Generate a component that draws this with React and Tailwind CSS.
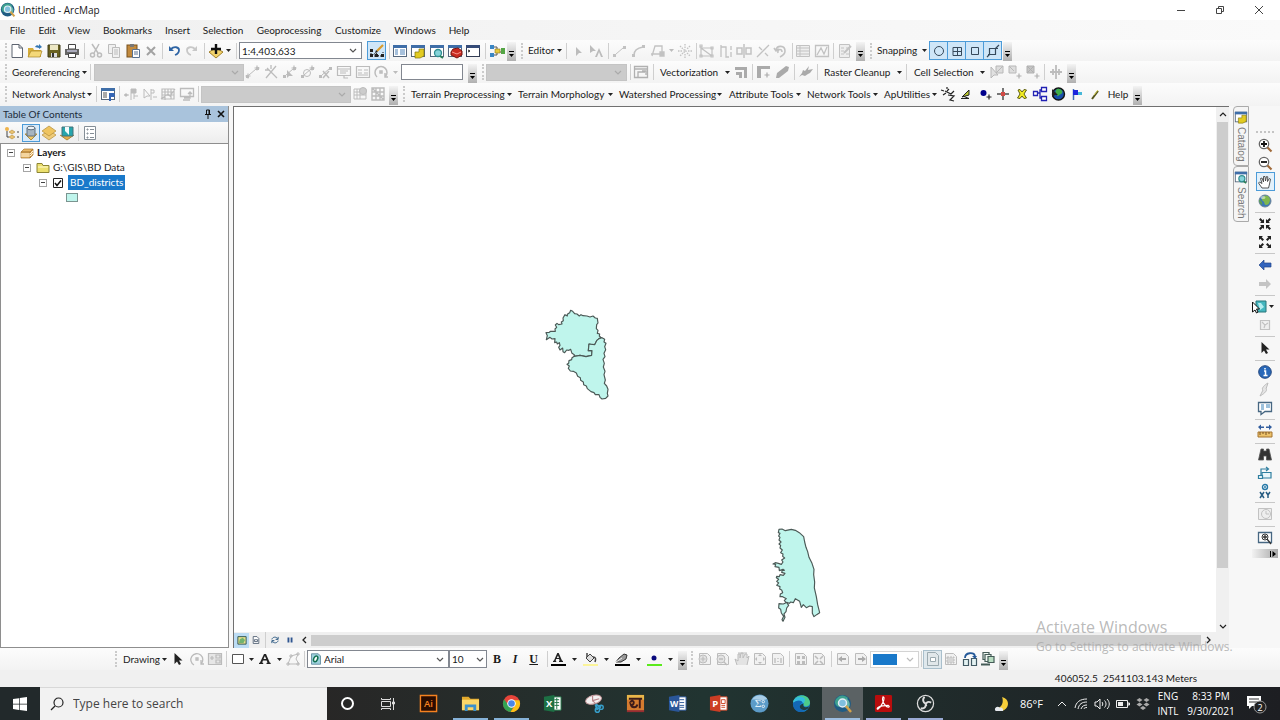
import React from "react";

const GREY = "#bcbcbc";
const caretPath = "M0 0h5L2.5 3z";

const nodes = (color) => (
  <g fill={color}>
    <path d="M1 11h3v3H1zM11 3h3v3h-3z" />
    <path d="M4 11 11 5" stroke={color} fill="none" />
  </g>
);
const plus = (x, y, color = GREY) => <path d={`M${x - 2.5} ${y}h5M${x} ${y - 2.5}v5`} stroke={color} strokeWidth="1.2" fill="none" />;
const win = (
  <g>
    <rect x="1.5" y="2.5" width="13" height="11" fill="#fff" stroke="#56677c" />
    <path d="M1 2h14v3H1z" fill="#3f6ea8" />
  </g>
);
const page = (
  <path d="M2.500 2.500h8l3 3v8h-11z" fill="#f1f1f1" stroke={GREY} />
);
const globe = (
  <g>
    <circle cx="8" cy="8" r="6" fill="#3b78b8" stroke="#6d8598" />
    <path d="M7 3c4-1 6 1 6 4s-2 5-4 5-1-3-3-4-1-4 1-5z" fill="#7fb74e" />
    <path d="M2 7c2 0 4 2 3 5-2-1-3-3-3-5z" fill="#5c9e53" />
    <ellipse cx="6" cy="4.500" rx="2.500" ry="1.500" fill="#fff" opacity=".5" />
  </g>
);
const bigPlus = (d) => (
  <g>
    <circle cx="7" cy="7" r="4.700" fill="#fff" stroke="#666" strokeWidth="1.300" />
    <path d="m10.500 10.500 4 4" stroke="#a06a3a" strokeWidth="2.200" />
    <path d={d} stroke="#111" strokeWidth="1.800" />
  </g>
);

const ICONS = {
  New: <path d="M3 1.500h7l3.500 3.500v9.500H3zM10 1.500V5h3.500" fill="#fff" stroke="#5d6470" />,
  Open: <g><path d="M1 5h5l1 2h7v7H1z" fill="#d6ad38" /><path d="m1 14 3-6h11l-2 6z" fill="#f4d878" stroke="#a88424" strokeWidth=".7" /><path d="M8 4c1-2 3-2 4-1V1l3 3-3 2V5" fill="#3577b5" /></g>,
  Save: <g><path d="M2 2h12v12H2z" fill="#6a6220" stroke="#403c18" /><path d="M4 2h8v5H4z" fill="#ece7c4" /><path d="M5 10h6v4H5z" fill="#ddd" /><path d="M6 10h2v4H6z" fill="#333" /></g>,
  Print: <g><path d="M4.500 1.500h7V6h-7z" fill="#fff" stroke="#444" /><path d="M1 6h14v6H1z" fill="#666" /><path d="M3 7h10v2H3z" fill="#aab" /><path d="M4.500 10.500h7v4h-7z" fill="#fff" stroke="#444" /></g>,
  Cut: <g fill="none" stroke="#bcbcbc" strokeWidth="1.500"><path d="m4 1 6 9M11 1 6 10" /><circle cx="4.500" cy="12" r="2" /><circle cx="11.500" cy="12" r="2" /></g>,
  Copy: <g fill="#f0f0f0" stroke="#bcbcbc"><path d="M2.500 1.500h7v9h-7z" /><path d="M6.500 4.500h7v10h-7zM8 7h4M8 9h4M8 11h4" /></g>,
  Paste: <g><rect x="2" y="2" width="10" height="12" fill="#c28a3e" stroke="#77501e" /><path d="M5 1h4v3H5z" fill="#777" /><path d="M7.500 6.500h7v8h-7zM9 9h4M9 11h4" fill="#fff" stroke="#587191" /></g>,
  Delete: <path d="m4 4 8 8M12 4l-8 8" stroke="#a2a2a2" strokeWidth="2" />,
  Undo: <g><path d="M5 6c3-3 8-2 8 1 0 2-1 4-4 5" fill="none" stroke="#2e64a4" strokeWidth="1.800" /><path d="M3 3v5h5z" fill="#2e64a4" /></g>,
  Redo: <g><path d="M11 6C8 3 3 4 3 7c0 2 1 4 4 5" fill="none" stroke="#c8c8c8" strokeWidth="1.800" /><path d="M13 3v5H8z" fill="#c8c8c8" /></g>,
  "Add Data": <g><path d="m1 9 7-4 7 4-7 6z" fill="#f3d36b" stroke="#a1802b" /><path d="M8 1v10M3 6h10" stroke="#111" strokeWidth="2.400" /></g>,
  "Editor Toolbar": <g><path d="M2 7v6h12V9M2 13l5-3 3 3" fill="none" stroke="#222" strokeDasharray="2 1" /><path d="M1 11h3v3H1zM6 11h3v3H6zM12 11h3v3h-3zM1 6h3v3H1z" fill="#222" /><path d="m8 8 6-6" stroke="#d99b2b" strokeWidth="2.200" /><path d="m6 10 1-3 2 2z" fill="#222" /></g>,
  "Table Of Contents": <g>{win}<path d="M3 7h3M3 9h3M3 11h3M8 7h5M8 9h5M8 11h5" stroke="#4f82b8" /></g>,
  "Catalog Window": <g>{win}<path d="M5 9h4V6h5v7l-4 2H5z" fill="#e2cb21" stroke="#807310" strokeWidth=".7" /></g>,
  "Search Window": <g>{win}<circle cx="9" cy="10" r="3.500" fill="#86d3da" stroke="#318e91" strokeWidth="1.300" /><path d="m11 13 3 2" stroke="#2a7d56" strokeWidth="2" /></g>,
  ArcToolbox: <g>{win}<path d="m4 9 2-3 5-1 4 3v4l-5 3-6-3z" fill="#c92a20" stroke="#721411" /><path d="m5 9 5 2 4-2" stroke="#fa988e" /></g>,
  Python: <g><rect x="1.500" y="2.500" width="13" height="11" fill="#fff" stroke="#333d54" /><path d="M1 2h14v3H1z" fill="#364c79" /><path d="m3 7 2 1-2 1" fill="none" stroke="#222" /></g>,
  ModelBuilder: <g><path d="M3 4h5v5h5M3 12h5V8" fill="none" stroke="#555" /><path d="M1 2h4v4H1z" fill="#3986c4" /><path d="M1 10h4v4H1z" fill="#3986c4" /><path d="M6 6h5v4H6z" fill="#e7c93a" stroke="#8d7819" strokeWidth=".6" /><path d="M12 5h4v6h-4z" fill="#54a545" /></g>,
  "Edit Tool": <path d="M6 4v9l3-3h3z" fill={GREY} />,
  "Edit Annotation": <g fill={GREY}><path d="M2 2v8l3-2h3z" /><path d="m7 14 4-9 4 9h-2l-2-5-2 5z" /></g>,
  Straight: nodes("#c2c2c2"),
  Arc: <g><path d="M3 12C3 8 6 5 12 4" fill="none" stroke="#c2c2c2" strokeWidth="1.400" /><path d="M1 11h3v3H1zM11 2h3v3h-3z" fill="#c2c2c2" /></g>,
  Trace: <g fill="none" stroke="#c2c2c2" strokeWidth="1.300"><path d="m3 13 3-10h7v8H2" /><path d="M11 9h4v4h-4z" fill="#c2c2c2" /></g>,
  Point: <g stroke="#c2c2c2" strokeWidth="1.300" strokeDasharray="1.500 1"><path d="M8 1v4M8 11v4M1 8h4M11 8h4M3 3l3 3M10 10l3 3M13 3l-3 3M6 10l-3 3" /><path d="M7 7h2v2H7z" /></g>,
  "Edit Vertices": <g fill="none" stroke="#c2c2c2" strokeWidth="1.200"><path d="M2 3v10h11V5H2l11 8" /><path d="M1 2h2v2H1zM12 12h2v2h-2zM1 12h2v2H1zM12 4h2v2h-2z" /></g>,
  Reshape: <g fill="none" stroke="#c2c2c2" strokeWidth="1.300"><path d="M3 2v12M3 4h5v10h3M13 3v4M13 9v5" /></g>,
  "Cut Polygons": <path d="M8 1v14M1 5h5v6H1zM10 5h5v6h-5z" fill="none" stroke="#c2c2c2" strokeWidth="1.500" />,
  Split: <path d="m2 14 12-12M4 4l3 3M10 10l3 3" fill="none" stroke="#c2c2c2" strokeWidth="1.300" />,
  Rotate: <path d="M3 7c1-5 9-5 9 1 0 3-3 5-5 6M5 10c-1-4 4-5 4-1M1 5l2 3 3-2" fill="none" stroke="#c2c2c2" strokeWidth="1.600" />,
  Attributes: <path d="M1.500 2.500h13v11h-13zM1 5h14M1 8h14M1 11h14M5 3v10" fill="#eee" stroke="#c2c2c2" />,
  Sketch: <path d="M1.500 2.500h13v11h-13zM3 12l4-7 3 6 3-7" fill="none" stroke="#c2c2c2" strokeWidth="1.300" />,
  "Create Features": <g><path d="M2.500 1.500h10v13h-10zM4 5h3M4 8h3M4 11h3M9 5h3M9 11h3" fill="#eee" stroke="#c2c2c2" /><path d="m7 10 7-7" stroke="#c2c2c2" strokeWidth="2" /></g>,
  "Point Snapping": <circle cx="8" cy="8" r="4.500" fill="none" stroke="#36495b" />,
  "End Snapping": <path d="M4 4.500h8.500v8H4zM8.500 4v9M4 8.500h9" fill="none" stroke="#36495b" />,
  "Vertex Snapping": <path d="M4.500 4.500h7v7h-7z" fill="none" stroke="#36495b" />,
  "Edge Snapping": <path d="M4.500 5.500h6v6h-6zM2 14l3-3M10 6l4-4M3 11.500h2M10 5.500h3" fill="none" stroke="#36495b" strokeWidth="1.200" />,
  "Add Control Points": <g>{nodes(GREY)}{plus(12, 4)}{plus(3, 12)}</g>,
  "Auto Registration": <g stroke={GREY} strokeWidth="1.300"><path d="m4 4 10 10M13 2 3 14M2 6h4M8 1v4" fill="none" /></g>,
  "Select Link": <g>{nodes(GREY)}<path d="M5 6v8l2-2h4z" fill={GREY} />{plus(12, 4)}</g>,
  "Zoom To Link": <g>{nodes(GREY)}<circle cx="7" cy="9" r="3.500" fill="none" stroke={GREY} />{plus(12, 4)}</g>,
  "Delete Link": <g>{nodes(GREY)}<path d="m5 7 6 7M11 7l-6 7" stroke={GREY} strokeWidth="1.500" /></g>,
  Viewer: <path d="M1.500 2.500h13v9h-13zM1 5h14M4 7h8M4 9h6M8 11v3h4" fill="none" stroke={GREY} strokeWidth="1.200" />,
  "Link Table": <path d="M1.500 2.500h13v11h-13zM3 6h4M9 6h4M3 9h4M9 9h4M3 11h10" fill="none" stroke={GREY} strokeWidth="1.200" />,
  "Rotate Raster": <g fill="none" stroke={GREY} strokeWidth="1.500"><path d="M4 13a6 6 0 1 1 8 0M12 9v4h3" /><path d="M7 7h2v2H7z" /></g>,
  "Raster Options": <path d="M1.500 2.500h13v11h-13zM1 5h14M5 13V8h7M9 7h4v4" fill="none" stroke="#b0b0b0" strokeWidth="1.300" />,
  "Generate Features": <path d="M2 3h12v11h-3V6H2zM3 8h6v6H6v-3H3z" fill="#aaa" />,
  Tracing: <g><path d="M1 2h13v3H5v9H1z" fill="#aaa" />{plus(11, 11, "#aaa")}</g>,
  "Tracing Between": <path d="m2 14 1-5 9-7 3 1-1 4-9 7z" fill="#aaa" />,
  "Vectorization Settings": <path d="m1 13 3-4 1-3 2 1 4-5-1 4 5-1-3 4-2 1-3 2-3-1z" fill="#aaa" />,
  "Select Cells": <g><path d="M7 2h7v7H7zM7 9l7-7" fill="#ddd" stroke="#b8b8b8" /><path d="M2 3v11l3-3h4z" fill="#e0e0e0" stroke="#b8b8b8" /></g>,
  "Select Connected": <g><path d="M2 2h7v7H2zM2 2l5 5" fill="#ddd" stroke="#b8b8b8" />{plus(12, 12, "#b0b0b0")}</g>,
  "Find Connected": <g><path d="M2 2h7v7H2zM2 9l7-7M2 2l7 7" fill="#c5c5c5" stroke="#b0b0b0" />{plus(12, 12, "#b0b0b0")}</g>,
  "Split Cells": <path d="M8 1v14M2 8h12M5 5v6M11 5v6" stroke={GREY} strokeWidth="1.800" />,
  "Network Analyst Window": <g>{win}<path d="M3 7h4M3 9h4M3 11h4" stroke="#555" /><path d="M9 7h5l1 2-1 2h-3v4H9z" fill="#3566b6" /></g>,
  "Create Location": <g stroke={GREY} fill={GREY}><path d="M1 9h5" /><path d="M2 8h2v2H2zM8 3v11M8 3h5v4H8M11 10h4M11 7v6" /></g>,
  "Move Location": <g stroke={GREY} fill="none"><path d="M2 3v9l3-2h3zM9 3v11M9 4h3v3H9M11 11h4" /></g>,
  Solve: <path d="M2 3h12v10H2zM2 6h12M2 9h12M5 3v11M8 3v7M11 3v10M1 13l7-5 2 2 5-7" fill="none" stroke={GREY} strokeWidth="1.200" />,
  Directions: <path d="M1.500 2.500h13v8h-13zM4 14h7M5 12h6V6M9 8l2-2 2 2" fill="none" stroke={GREY} strokeWidth="1.300" />,
  "Network Identify": <g fill="none" stroke={GREY}><path d="M2 3h12v10H2zM2 6h12M2 9h12M5 3v10M8 3v10" /><circle cx="11" cy="5" r="3.500" fill="#ccc" /></g>,
  "Build Network": <path d="M2 2h12v12H2zM2 6h12M2 10h12M6 2v12M10 2v12M2 2l12 12" fill="none" stroke={GREY} strokeWidth="1.400" />,
  "Flow Path": <path d="m1 4 3 1M7 1v2M3 9l3-2M5 5l2 1 4 2 3-3M8 9l6 1-4 4 4 1M9 3 7 5" fill="none" stroke="#222" strokeWidth="1.200" />,
  "Interactive Slope": <g><path d="m4 11 7-7v5z" fill="#b9c62e" stroke="#222" /><path d="M3 12.500h8l-5-2" stroke="#222" /></g>,
  "Point Delineation": <g><circle cx="6.500" cy="7" r="3" fill="#00008c" />{plus(12, 11, "#222")}</g>,
  "Batch Point": <g><path d="M8 2v12M2 8h12" stroke="#777" strokeWidth="2" /><path d="M6 6h4v4H6z" fill="#d24b46" /></g>,
  "Assign Related": <path d="m4 4 2-.5L8 6l2-2.500 2.500.5L10 8l2.500 4-2.500.5L8 10l-2 2.500L3.500 12 6 8z" fill="#f0ea22" stroke="#606014" />,
  Network: <path d="M1.500 5.500h4v4h-4zM9.500 1.500h5v4h-5zM9.500 10.500h5v4h-5zM6 7h2v5h1M8 7V4h1" fill="#fff" stroke="#2222b4" strokeWidth="1.300" />,
  "Google Export": <g><circle cx="8.500" cy="8" r="6" fill="#174eaa" stroke="#111" strokeWidth="1.400" /><path d="M7 3c5-1 7 4 4 5S8 12 7 9 4 6 7 3z" fill="#3fae48" /><path d="M2 3v8l3-2h3z" fill="#222" /></g>,
  Flag: <g><path d="M4.500 3v11" stroke="#3f6fb5" strokeWidth="1.500" /><path d="M4 4h5v5H4z" fill="#1b25dd" /><path d="M9 6h4v3H9z" fill="#46b7d8" /></g>,
  Pencil: <g><path d="m5 13 6-8" stroke="#56561c" strokeWidth="2" /><path d="m7 9 4-5" stroke="#d8d058" /></g>,
  Pan: <path d="m5 14-3.500-5 1-1L5 9.500l-1.500-5L5 4l1.500 4L6.500 2.500H8L8.500 7l1-4.500 1.300.3L10.500 7.500l1.800-3 1.200.6L12.500 10l-1 4z" fill="#fff" stroke="#444" strokeWidth=".9" />,
  "Zoom In": bigPlus("M4 7h6M7 4v6"),
  "Zoom Out": bigPlus("M4 7h6"),
  "Full Extent": globe,
  "Fixed Zoom In": <path d="M7 3v4H3l1.300-1.300L2 3.500 3.500 2l2.200 2.300zM9 3v4h4l-1.300-1.300L14 3.500 12.500 2l-2.200 2.300zM7 13V9H3l1.300 1.300L2 12.500 3.500 14l2.200-2.300zM9 13V9h4l-1.300 1.300L14 12.500 12.500 14l-2.200-2.300z" fill="#222" />,
  "Fixed Zoom Out": <path d="M2 6V2h4L4.700 3.300 7 5.500 5.500 7 3.300 4.700zM14 6V2h-4l1.300 1.300L9 5.500 10.500 7l2.200-2.300zM2 10v4h4l-1.300-1.300L7 10.500 5.500 9l-2.200 2.300zM14 10v4h-4l1.300-1.300L9 10.500 10.500 9l2.200 2.300z" fill="#222" />,
  Back: <path d="m2 8 5-5v3h7v4H7v3z" fill="#3264bd" stroke="#24468a" strokeWidth=".7" />,
  Forward: <path d="m14 8-5-5v3H2v4h7v3z" fill="#c4c4c4" />,
  "Select Features": <g><path d="M5 2h10v11H5z" fill="#44b6bf" stroke="#29777b" /><path d="M7 4h3l3 4-4 3z" fill="#b4edf0" /><path d="M1.500 3v10l2.500-2 1.500 3 1.500-1-1.500-3h3z" fill="#fff" stroke="#111" /></g>,
  "Clear Selection": <path d="M3.500 3.500h9v9h-9zM5 5l3 3 3-2M8 8l-1 3" fill="#eee" stroke="#c2c2c2" strokeWidth="1.200" />,
  "Select Elements": <path d="M4.500 2v11l2.500-2.500L9 14l2-1-2-3.500h3.500z" fill="#222" />,
  Identify: <g><circle cx="8" cy="8" r="6.300" fill="#2868b9" stroke="#24477e" /><path d="M7 7h1.500v4.500M6.500 11.500h4M8 4v1.500" stroke="#fff" strokeWidth="1.500" fill="none" /></g>,
  Hyperlink: <path d="M11 1C7 3 4 7 6 8l-3 6c4-2 8-6 6-7z" fill="#e4e4e4" stroke="#bbb" />,
  "HTML Popup": <g><path d="M1.500 2.500h13v9H8l-4 3v-3H1.500z" fill="#fff" stroke="#476782" strokeWidth="1.300" /><path d="M4 5h3M4 7h3M4 9h3M9 5h4M9 7h4" stroke="#3d83b9" /></g>,
  Measure: <g><path d="M1 9h14v5H1z" fill="#ecc16a" stroke="#a57531" /><path d="M3 9v3M6 9v2M9 9v3M12 9v2" stroke="#7b5424" /><path d="m1 4 3-2.500v2h3v1.500H4v2zM15 4l-3-2.500v2H9v1.500h3v2z" fill="#315d9e" /></g>,
  Find: <path d="M4 2h2.500v2h3V2H12l2.500 11h-5V9h-3v4h-5z" fill="#333" stroke="#555" strokeWidth=".8" />,
  "Find Route": <g fill="#e9f6fa" stroke="#307fa0" strokeWidth="1.200"><path d="M5 7.500h9v5.500H5z" /><path d="M4 10V4h7M9 2l2.500 2L9 6" fill="none" /><path d="M1.500 10.500h4v3h-4z" /></g>,
  "Go To XY": <g><circle cx="8" cy="4" r="2.500" fill="#fff" stroke="#2778a7" strokeWidth="1.400" /><circle cx="8" cy="4" r="1" fill="#2778a7" /><path d="m3 9 4 6M7 9l-4 6M9 9l2 3 2-3M11 12v3" fill="none" stroke="#285d83" strokeWidth="1.500" /></g>,
  "Time Slider": <g fill="#eee" stroke="#c2c2c2"><path d="M1.500 2.500h13v11h-13z" /><circle cx="9" cy="8" r="4.500" /><path d="M9 5v3h3" /></g>,
  "Viewer Window": <g><path d="M1.500 2.500h13v10h-13z" fill="#fff" stroke="#476782" strokeWidth="1.300" /><circle cx="8" cy="7" r="3" fill="#fff" stroke="#333" /><path d="M6 7h4M8 5v4M10 9l4 5" stroke="#333" strokeWidth="1.300" /></g>,
  "List By Drawing Order": <g><circle cx="3" cy="4" r="2" fill="#eeb34b" /><path d="m5 7 3-2 3 2-3 2zM5 12l3-2 3 2-3 2z" fill="#e9c26f" stroke="#b48a3d" strokeWidth=".6" /><path d="M3 6v6h2M13 7h2M13 12h2" fill="none" stroke="#444" /></g>,
  "List By Source": <g><path d="M2 9h12l-6 6z" fill="#f0c768" stroke="#b28e3d" /><path d="M4 3h8v8H4z" fill="#a7b4c0" stroke="#5f7180" /><ellipse cx="8" cy="3" rx="4" ry="1.800" fill="#eef2f7" stroke="#5f7180" /></g>,
  "List By Visibility": <g stroke="#b28c3a" strokeWidth=".7"><path d="m1 10 7-5 7 5-7 5z" fill="#efcc7a" /><path d="m1 6 7-5 7 5-7 5z" fill="#efc45f" /></g>,
  "List By Selection": <g><path d="m1 10 7 5 7-5" fill="#e4ad4c" stroke="#b28c3a" /><path d="M3 2h11v9H3z" fill="#26a6ad" stroke="#457078" /><path d="M6 2v4l4 4V2" fill="#f3fafb" /></g>,
  Options: <path d="M2.500 1.500h11v13h-11zM5 4h1v1H5zM5 8h1v1H5zM5 12h1v1H5zM8 4.500h4M8 8.500h4M8 12.500h4" fill="#fff" stroke="#858e96" />,
  "Rotate Element": <g fill="none" stroke="#bbb" strokeWidth="1.300"><path d="M5 14a6 6 0 1 1 7-1M12 9v4h3" /><path d="M7 7h2v2H7z" /></g>,
  "Zoom Selected": <path d="M1.500 2.500h13v11h-13zM3 7h4M5 5v4M9 4h4v3H9zM9 9h4v3H9z" fill="#e6e6e6" stroke="#bbb" strokeWidth="1.200" />,
  Rectangle: <path d="M2.500 3.500h11v9h-11z" fill="#fff" stroke="#555" />,
  "Text Tool": <path d="M4.500 13H2v-1l1-.5L7 3h2l3.700 8.500 1 .5v1H9.500v-1l1-.5-.8-2H6l-.8 2 1 .5v1zM6.500 8h2.700L7.900 5z" fill="#222" />,
  "Edit Shape": <path d="M3 13 6 5l7-2-2 5 3 5H3M2 12h2v2H2zM12 2h2v2h-2zM5 4h2v2H5zM12 12h2v2h-2z" fill="none" stroke="#bbb" />,
  "Layout Zoom In": <g>{page}<circle cx="6" cy="8" r="4" fill="#e3e3e3" stroke={GREY} />{plus(6, 8)}</g>,
  "Layout Zoom Out": <g>{page}<circle cx="6" cy="8" r="4" fill="#e3e3e3" stroke={GREY} /><path d="M4 8h4M9 11l3 3" stroke={GREY} strokeWidth="1.300" /></g>,
  "Layout Pan": <path d="m3 14-2-6 3 2V3h2v4l1-5h2v5l2-4h2v4l2-2-2 9M4 2h9" fill="#e3e3e3" stroke={GREY} />,
  "Zoom Whole Page": <g>{page}<path d="m8 3 2 2H6zM8 13l2-2H6zM3 8l2-2v4zM13 8l-2-2v4z" fill={GREY} /></g>,
  "Zoom 100": <g>{page}<path d="M5 7v5M11 7v5M8 7v1M8 10v1" stroke={GREY} strokeWidth="1.300" /></g>,
  "Layout Fixed In": <g>{page}<path d="M4 5h3v3H4zM9 5h3v3H9zM4 10h3v3H4zM9 10h3v3H9z" fill={GREY} /></g>,
  "Layout Fixed Out": <g>{page}<path d="m4 5 3 3M12 5 9 8M4 13l3-3M12 13l-3-3" stroke={GREY} strokeWidth="1.600" /></g>,
  "Layout Back": <g>{page}<path d="m3 8 4-3v2h4v2H7v2z" fill="#aaa" /></g>,
  "Layout Forward": <g>{page}<path d="M13 8 9 5v2H5v2h4v2z" fill="#aaa" /></g>,
  "Draft Mode": <g><path d="M2.500 1.500h8l3 3v10h-11z" fill="#e1e7ea" stroke="#9caab0" /><path d="M5.500 6.500h5v4h-5z" fill="#fff" stroke="#9caab0" /></g>,
  "Focus Frame": <g>{page}<path d="M4 6h7v6H4z" fill="#d5d5d5" stroke={GREY} strokeDasharray="2 1" /></g>,
  "Change Layout": <g><path d="M1.500 8.500h5v6h-5zM9.500 7.500h5v7h-5z" fill="#e5f3f3" stroke="#435b65" strokeWidth="1.200" /><path d="M3 7c0-6 9-6 10-2" fill="none" stroke="#245999" strokeWidth="1.800" /><path d="M10 5h5l-2 3z" fill="#245999" /></g>,
  "Data Driven Pages": <g fill="#eff8f2" stroke="#455c58" strokeWidth="1.200"><path d="M3 1.500h6v7H3z" /><path d="M5 3.500h6v7H5z" /><path d="M8 5.500h6v6H8z" fill="#b9ddc2" /><path d="M1 13.500h9" strokeWidth="2" /></g>,
  "Data View": <g><path d="M2.500 3.500h11v10h-11z" fill="#e7df8a" stroke="#315a58" strokeWidth="1.300" /><path d="m4 12 1-5 4-2 3 3-2 4z" fill="#6fb36f" /></g>,
  "Layout View": <path d="M3.500 2.500h6l3 3v8h-9zM5.500 7.500h5v3h-5z" fill="#fff" stroke="#425368" strokeWidth="1.300" />,
  Refresh: <g fill="none" stroke="#315d85" strokeWidth="1.600"><path d="M3 7c1-4 7-5 9-1M13 9c-1 4-7 5-9 1" /><path d="M13 3v4H9M3 13V9h4" /></g>,
  Pause: <path d="M4 4h3v8H4zM9 4h3v8H9z" fill="#2e5590" />,
  Style: <g><path d="M2 1h9l3 3v11H2z" fill="#9ed1dd" stroke="#527e91" /><ellipse cx="7.500" cy="8" rx="2.500" ry="4" fill="#fff" stroke="#127050" strokeWidth="2" transform="rotate(25 8 8)" /></g>,
};

function Icon({ name, className = "size-4" }) {
  return <svg viewBox="0 0 16 16" className={"shrink-0 " + className} fill="none" aria-hidden="true">{ICONS[name]}</svg>;
}
function Tool({ name, className = "", icon }) {
  return <button type="button" aria-label={name} className={"flex shrink-0 items-center justify-center " + className}><Icon name={name} className={icon} /></button>;
}
function Group({ names, className }) {
  return <div className={"flex shrink-0 items-center justify-between " + className}>{names.map((n) => <Tool key={n} name={n} />)}</div>;
}
function Caret({ color = "#222" }) {
  return <svg viewBox="0 0 5 3" className="h-[3px] w-[5px] shrink-0" aria-hidden="true"><path d={caretPath} fill={color} /></svg>;
}
function Drop({ label = "More", color, className = "w-2" }) {
  return <button type="button" aria-label={label} className={"flex h-4 shrink-0 items-center justify-center " + className}><Caret color={color} /></button>;
}
const Sep = ({ className = "w-2" }) => <div className={"flex h-4 shrink-0 justify-center " + className}><div className="w-px bg-[#cfcfcf]" /></div>;
const Grip = ({ className = "" }) => <div className={"h-4 w-1.5 shrink-0 " + className}><div className="mx-auto h-full w-0 border-l-2 border-dotted border-[#cbcbcb]" /></div>;
function Overflow({ className = "" }) {
  return (
    <button type="button" aria-label="Toolbar options" className={"flex h-[19px] w-[9px] shrink-0 flex-col items-center justify-end gap-0.5 self-end bg-linear-to-b from-[#f4f4f4] to-[#b0b0b0] pb-1 " + className}>
      <span className="h-px w-[5px] bg-black" /><Caret color="#000" />
    </button>
  );
}
function Menu({ children, className }) {
  return <button type="button" className={"flex shrink-0 items-center justify-between whitespace-nowrap " + className}>{children}<Caret /></button>;
}
function Chevron({ d = "M1 1l3 3 3-3", className = "h-[5px] w-2", color = "#555" }) {
  return <svg viewBox="0 0 8 5" className={"shrink-0 " + className} fill="none" stroke={color} aria-hidden="true"><path d={d} strokeWidth="1.200" /></svg>;
}
function Combo({ label, value = "", className, disabled }) {
  return (
    <div className={"relative h-[17px] shrink-0 border " + (disabled ? "border-[#c4c4c4] bg-[#cbcbcb] " : "border-[#828790] bg-white ") + className}>
      <select aria-label={label} disabled={disabled} className="block size-full appearance-none bg-transparent pr-4 pl-0.5 leading-none outline-none"><option>{value}</option></select>
      <div className="pointer-events-none absolute inset-y-0 right-1 flex items-center"><Chevron color={disabled ? "#aaa" : "#555"} /></div>
    </div>
  );
}

const MENUS = [["File", "w-[29px]"], ["Edit", "w-[30px]"], ["View", "w-[34px]"], ["Bookmarks", "w-[63px]"], ["Insert", "w-[37px]"], ["Selection", "w-[54px]"], ["Geoprocessing", "w-[78px]"], ["Customize", "w-[60px]"], ["Windows", "w-[54px]"], ["Help", "w-[34px]"]];

function TopBars() {
  return (
    <header className="shrink-0">
      <div className="flex h-5 items-center bg-white pr-0.5">
        <AppLogo className="size-4" />
        <h1 className="ml-0.5 font-['Open_Sans']">Untitled - ArcMap</h1>
        <div className="ml-auto flex items-center">
          <button type="button" aria-label="Minimize" className="flex w-[39px] justify-center"><svg viewBox="0 0 10 10" className="size-2.5" stroke="#444"><path d="M1 5.500h8" /></svg></button>
          <button type="button" aria-label="Restore" className="flex w-[39px] justify-center"><svg viewBox="0 0 10 10" className="size-2.5" stroke="#444" fill="none"><path d="M1.500 3.500h5v5h-5zM3.500 3V1.500h5v5H7" /></svg></button>
          <button type="button" aria-label="Close" className="flex w-[39px] justify-center"><svg viewBox="0 0 10 10" className="size-2.5" stroke="#444"><path d="m1 1 8 8M9 1 1 9" /></svg></button>
        </div>
      </div>
      <nav className="flex h-5 items-center bg-linear-to-r from-[#f0f0f0] to-[#fafafa] pl-[3px]">
        {MENUS.map(([m, w]) => <button key={m} type="button" className={"shrink-0 text-center whitespace-nowrap " + w}>{m}</button>)}
      </nav>
      <div className="flex h-[21px] items-center bg-linear-to-b from-[#fcfcfc] to-[#f3f3f3] pl-[3px]">
        <Grip /><Group className="w-[71px]" names={["New", "Open", "Save", "Print"]} />
        <Sep /><Group className="w-[71px]" names={["Cut", "Copy", "Paste", "Delete"]} />
        <Sep className="w-[7px]" /><Group className="w-[34px]" names={["Undo", "Redo"]} />
        <Sep /><Tool name="Add Data" /><Drop label="Add data options" className="w-[9px]" />
        <Sep className="w-1.5" /><Combo label="Map scale" value="1:4,403,633" className="w-[123px]" />
        <Tool name="Editor Toolbar" className="ml-[5px] size-[19px] border border-[#4c9bd8] bg-[#cfe6f8]" />
        <Sep className="w-1.5" /><Group className="w-[89px]" names={["Table Of Contents", "Catalog Window", "Search Window", "ArcToolbox", "Python"]} />
        <Sep /><Tool name="ModelBuilder" /><Overflow className="ml-0.5" />
        <Grip className="ml-[3px]" /><Menu className="ml-[3px] w-[34px]">Editor</Menu>
        <Sep /><Group className="w-[34px]" names={["Edit Tool", "Edit Annotation"]} />
        <Sep /><Group className="w-[53px]" names={["Straight", "Arc", "Trace"]} /><Drop color={GREY} label="Trace options" className="w-3" />
        <Tool name="Point" /><Sep className="w-1.5" /><Group className="w-[90px]" names={["Edit Vertices", "Reshape", "Cut Polygons", "Split", "Rotate"]} />
        <Sep className="w-1.5" /><Group className="w-[35px]" names={["Attributes", "Sketch"]} /><Sep className="w-[7px]" /><Tool name="Create Features" />
        <Overflow className="ml-[3px]" /><Grip className="ml-[3px]" /><Menu className="ml-[3px] w-[50px]">Snapping</Menu>
        <div className="ml-0.5 flex">
          {["Point Snapping", "End Snapping", "Vertex Snapping", "Edge Snapping"].map((n) => <Tool key={n} name={n} className="-mr-px size-[19px] border border-[#4c9bd8] bg-[#cfe6f8]" />)}
        </div>
        <Overflow className="ml-0.5" />
      </div>
      <div className="flex h-[22px] items-center bg-linear-to-b from-[#fcfcfc] to-[#f3f3f3] pl-[3px]">
        <Grip /><Menu className="ml-[3px] w-[75px]">Georeferencing</Menu><Sep className="w-[7px]" />
        <Combo label="Raster layer" disabled className="w-[150px]" />
        <Group className="ml-px w-[144px]" names={["Add Control Points", "Auto Registration", "Select Link", "Zoom To Link", "Delete Link", "Viewer", "Link Table", "Rotate Raster"]} />
        <Drop color={GREY} label="Rotate options" className="w-3" />
        <input aria-label="Rotation angle" className="h-4 w-[62px] shrink-0 border border-[#828790] bg-white outline-none" />
        <Overflow className="ml-[5px]" /><Grip className="ml-[3px]" />
        <Combo label="Vectorization raster" disabled className="w-[141px]" />
        <Sep className="w-1.5" /><Tool name="Raster Options" /><Sep />
        <Menu className="ml-[3px] w-[70px]">Vectorization</Menu><Tool name="Generate Features" className="ml-[3px]" />
        <Sep className="w-[7px]" /><Group className="w-[34px]" names={["Tracing", "Tracing Between"]} />
        <Sep /><Tool name="Vectorization Settings" /><Sep className="w-1.5" />
        <Menu className="ml-1 w-[78px]">Raster Cleanup</Menu><Sep className="ml-px w-[7px]" />
        <Menu className="ml-1 w-[71px]">Cell Selection</Menu>
        <Group className="ml-1 w-[52px]" names={["Select Cells", "Select Connected", "Find Connected"]} />
        <Sep className="w-[7px]" /><Tool name="Split Cells" /><Overflow className="ml-[3px]" />
      </div>
      <div className="flex h-[23px] items-center bg-linear-to-b from-[#fcfcfc] to-[#f3f3f3] pb-px pl-[3px]">
        <Grip /><Menu className="ml-[3px] w-20">Network Analyst</Menu><Sep />
        <Tool name="Network Analyst Window" /><Sep className="w-[7px]" />
        <Group className="w-[72px]" names={["Create Location", "Move Location", "Solve", "Directions"]} />
        <Sep className="w-1.5" /><Combo label="Network dataset" disabled className="w-[150px]" />
        <Group className="ml-px w-[34px]" names={["Network Identify", "Build Network"]} /><Overflow className="ml-[3px]" />
        <Grip className="ml-[3px]" />
        <Menu className="ml-1 w-[101px]">Terrain Preprocessing</Menu>
        <Menu className="ml-1.5 w-[95px]">Terrain Morphology</Menu>
        <Menu className="ml-1.5 w-[103px]">Watershed Processing</Menu>
        <Menu className="ml-[7px] w-[72px]">Attribute Tools</Menu>
        <Menu className="ml-1.5 w-[71px]">Network Tools</Menu>
        <Menu className="ml-1.5 w-[53px]">ApUtilities</Menu>
        <Group className="ml-[3px] w-[163px]" names={["Flow Path", "Interactive Slope", "Point Delineation", "Batch Point", "Assign Related", "Network", "Google Export", "Flag", "Pencil"]} />
        <button type="button" className="ml-1 w-[22px] shrink-0 text-center">Help</button><Overflow className="ml-1" />
      </div>
    </header>
  );
}

function AppLogo({ className }) {
  return (
    <svg viewBox="0 0 20 20" className={"shrink-0 " + className} aria-hidden="true">
      <circle cx="9.500" cy="9.500" r="8.500" fill="#1f5c84" />
      <path d="M3 5c4-5 9-4 12-1l-3 4-4-2-2 7C2 12 1 8 3 5z" fill="#3da08f" />
      <path d="M13 4c4 3 5 7 2 11l-4-2z" fill="#66b6a9" />
      <circle cx="9.500" cy="9" r="4" fill="#7fc0de" stroke="#e2eef5" strokeWidth="1.500" />
      <path d="m13 12 5 6" stroke="#d3a24a" strokeWidth="2.500" />
    </svg>
  );
}

const Expander = () => <button type="button" aria-label="Collapse" className="flex size-2 shrink-0 items-center justify-center border border-[#a5a5a5] bg-white"><span className="h-px w-1 bg-[#444]" /></button>;

function Contents() {
  return (
    <aside className="flex w-[229px] shrink-0 flex-col border-r border-[#8e8e8e]">
      <div className="flex h-4 items-center bg-[#a9c3dc] pr-[3px] pl-[3px] text-[#1c2b3a]">
        <h2>Table Of Contents</h2>
        <button type="button" aria-label="Auto hide" className="ml-auto"><svg viewBox="0 0 10 10" className="size-2.5" stroke="#111" fill="none"><path d="M3.500 1h3v4.500h-3zM6 1v4M2 5.500h6M5 6v4" /></svg></button>
        <button type="button" aria-label="Close" className="ml-1"><svg viewBox="0 0 8 8" className="size-2" stroke="#111"><path d="m1 1 6 6M7 1 1 7" strokeWidth="1.600" /></svg></button>
      </div>
      <div className="flex h-[22px] items-center border-b border-[#8e8e8e] bg-linear-to-b from-[#fafafa] to-[#ededed] pl-1">
        <Tool name="List By Drawing Order" /><Tool name="List By Source" className="ml-0.5 size-[18px] border border-[#4c9bd8] bg-[#d8eafa]" />
        <Tool name="List By Visibility" className="ml-px" /><Tool name="List By Selection" className="ml-0.5" /><Sep className="w-[7px]" /><Tool name="Options" />
      </div>
      <div className="flex flex-1 flex-col border-b border-l border-[#8e8e8e] bg-white pt-px">
        <div className="flex h-[15px] items-center pl-1.5"><Expander />
          <svg viewBox="0 0 14 12" className="ml-[5px] mr-[3px] h-3 w-3.5"><path d="m1 5 3-3h9l-3 3zM1 5h9v6H1zM10 5l3-3v6l-3 3z" fill="#e9b765" stroke="#a77632" strokeWidth=".7" /><path d="M1 7h9l3-3M1 9h9l3-3" fill="none" stroke="#fff2d8" /></svg>
          <b>Layers</b></div>
        <div className="flex h-[15px] items-center pl-[22px]"><Expander />
          <svg viewBox="0 0 14 12" className="ml-[5px] mr-[3px] h-3 w-3.5"><path d="M1 1.500h5l1 2h6v7H1z" fill="#ece06e" stroke="#8c8434" /><path d="M2 5h10" stroke="#fffad0" /></svg>
          <span className="whitespace-nowrap">G:\GIS\BD Data</span></div>
        <div className="flex h-[15px] items-center pl-[38px]"><Expander />
          <label className="flex items-center"><input type="checkbox" defaultChecked className="peer sr-only" />
            <svg viewBox="0 0 10 10" className="ml-1.5 mr-[5px] size-2.5"><path d="M.5.5h9v9h-9z" fill="#fff" stroke="#222" /><path d="m2 5 2 2.500L8 2.500" fill="none" stroke="#111" strokeWidth="1.500" /></svg>
            <span className="flex h-[15px] items-center bg-[#1979ca] px-0.5 text-white">BD_districts</span></label></div>
        <div className="flex h-[15px] items-center pl-[65px]"><div className="h-[9px] w-3 border border-[#7b9490] bg-[#bff5ec]" /></div>
      </div>
    </aside>
  );
}

const NORTH_WEST = "48,98 52,107 49,119 60,112 66,117 75,116 74,128 80,126 82,132 88,128 90,136 86,142 90,150 98,144 99,155 104,158 110,150 117,151 122,148 126,160 133,164 132,169 150,166 168,170 185,166 186,152 175,152 177,132 184,134 194,134 200,122 207,116 214,114 208,108 209,102 202,100 204,91 199,86 200,74 204,69 202,55 196,54 189,48 180,51 171,48 159,47 153,44 148,48 141,42 134,41 128,34 122,31 119,38 112,43 112,48 105,44 99,54 100,62 94,66 96,72 86,74 81,70 76,75 80,82 75,87 76,94 62,94 58,97";
const SOUTH_WEST = "133,169 150,166 168,170 185,166 186,152 175,152 177,132 194,134 200,122 207,116 216,113 224,118 222,126 228,130 224,140 227,149 222,160 225,170 219,178 223,190 220,201 225,214 222,224 226,240 223,250 230,258 234,268 232,280 234,288 227,295 216,297 210,292 207,284 196,284 192,278 183,275 172,266 169,258 161,254 160,246 152,241 151,233 143,229 139,219 130,214 121,213 115,205 118,198 111,193 116,190 117,182 125,179 126,173";
const SOUTH_EAST = "57,28 66,27 76,32 94,28 106,31 118,38 131,50 134,66 138,82 143,95 147,112 156,130 162,148 161,164 164,186 163,204 169,230 173,254 179,278 170,284 162,290 157,280 157,260 149,258 139,263 130,254 124,262 119,244 106,236 100,248 92,246 88,250 80,247 86,256 80,264 78,275 72,282 75,292 69,304 66,299 71,289 64,279 62,268 56,264 57,251 70,252 78,248 73,241 79,236 68,230 60,230 61,222 68,218 65,210 59,207 60,200 50,196 56,189 50,184 56,178 49,173 50,169 58,170 60,164 70,166 75,160 65,157 67,151 73,151 69,148 58,152 57,142 45,140 47,133 39,132 46,128 55,130 64,133 69,126 65,120 74,114 68,109 69,102 62,98 67,90 60,84 62,76 57,72 63,66 57,60 60,52 56,48 60,40 55,38";

function MapView() {
  return (
    <main className="ml-1 flex min-w-0 flex-1 flex-col border-t border-l border-[#707070] bg-[#f0f0f0]">
      <div className="flex flex-1">
        <div className="relative min-w-0 flex-1 overflow-hidden bg-white">
          <svg className="absolute inset-0 size-full" role="img" aria-label="BD_districts" fill="#bff5ec" stroke="#4b5956" strokeWidth="3.500" strokeLinejoin="round">
            <g transform="translate(296 193) scale(.3333)"><polygon points={NORTH_WEST} /><polygon points={SOUTH_WEST} /></g>
            <g transform="translate(526 413) scale(.3333)"><polygon points={SOUTH_EAST} /></g>
          </svg>
        </div>
        <div className="flex w-[13px] shrink-0 flex-col items-center bg-[#f0f0f0]">
          <button type="button" aria-label="Scroll up" className="flex h-[15px] items-center"><Chevron d="M1 4l3-3 3 3" color="#222" /></button>
          <div className="w-[11px] flex-1 bg-[#cdcdcd]" /><div className="h-[52px]" />
          <button type="button" aria-label="Scroll down" className="flex h-3 items-center"><Chevron color="#222" /></button>
        </div>
      </div>
      <div className="flex h-4 items-center">
        <Tool name="Data View" icon="size-3" className="h-[15px] w-[15px] bg-[#bcdcf4]" /><Tool name="Layout View" icon="size-2.5" className="w-[13px]" /><Sep className="w-1.5" />
        <Tool name="Refresh" icon="size-2.5" className="w-3.5" /><Tool name="Pause" icon="size-2.5" className="w-4" />
        <button type="button" aria-label="Scroll left" className="flex w-[13px] justify-center"><svg viewBox="0 0 5 8" className="h-2 w-[5px]" fill="none" stroke="#222"><path d="M4 1 1 4l3 3" strokeWidth="1.300" /></svg></button>
        <div className="h-[11px] flex-1 bg-[#cdcdcd]" />
        <button type="button" aria-label="Scroll right" className="mr-[13px] flex w-[15px] justify-center"><svg viewBox="0 0 5 8" className="h-2 w-[5px]" fill="none" stroke="#222"><path d="m1 1 3 3-3 3" strokeWidth="1.300" /></svg></button>
      </div>
    </main>
  );
}

const HLine = () => <div className="my-0.5 h-px w-5 shrink-0 bg-[#c8c8c8]" />;
const VTool = ({ name }) => <Tool name={name} className="h-[18px] w-5" />;
function RightSide() {
  return (
    <div className="flex w-[51px] shrink-0 justify-between pr-[5px] pl-1">
      <div className="flex flex-col text-[#777]">
        {[["Catalog", "Catalog Window", "h-[60px]"], ["Search", "Search Window", "h-[56px]"]].map(([t, i, h]) => (
          <button key={t} type="button" className={"flex w-4 flex-col items-center gap-[3px] rounded-l-sm border border-[#aaa] bg-[#f5f5f5] pt-[3px] " + h}><Icon name={i} className="size-3.5" /><span className="font-['Liberation_Sans'] text-[10px] leading-3 [writing-mode:vertical-rl]">{t}</span></button>
        ))}
      </div>
      <div className="mt-[25px] flex w-5 flex-col items-center">
        <div className="mb-[3px] w-[18px] border-t-2 border-dotted border-[#c4c4c4]" />
        <div className="flex h-[411px] flex-col items-center justify-between">
          <VTool name="Zoom In" /><VTool name="Zoom Out" /><Tool name="Pan" className="size-[19px] border border-[#4c9bd8] bg-[#e3f1fb]" /><VTool name="Full Extent" />
          <HLine /><VTool name="Fixed Zoom In" /><VTool name="Fixed Zoom Out" />
          <HLine /><VTool name="Back" /><VTool name="Forward" />
          <HLine /><div className="flex h-[18px] w-5 items-center"><Tool name="Select Features" className="-ml-1" /><Drop label="Selection options" /></div><VTool name="Clear Selection" />
          <HLine /><VTool name="Select Elements" />
          <HLine /><VTool name="Identify" /><VTool name="Hyperlink" /><VTool name="HTML Popup" />
          <HLine /><VTool name="Measure" />
          <HLine /><VTool name="Find" /><VTool name="Find Route" /><VTool name="Go To XY" />
          <HLine /><VTool name="Time Slider" />
          <HLine /><VTool name="Viewer Window" />
        </div>
        <button type="button" aria-label="Toolbar options" className="mt-0.5 flex h-[9px] w-[26px] shrink-0 items-center justify-end bg-linear-to-r from-[#f2f2f2] to-[#a8a8a8] pr-0.5"><svg viewBox="0 0 6 6" className="size-1.5"><path d="M0 0h1v6H0zM2.500 0 6 3 2.500 6z" /></svg></button>
      </div>
    </div>
  );
}

function ColorTool({ name, bar, children }) {
  return <><button type="button" aria-label={name} className="flex w-4 shrink-0 flex-col items-center"><svg viewBox="0 0 16 11" className="h-[11px] w-4" aria-hidden="true">{children}</svg><span className={"h-0.5 w-[15px] " + bar} /></button><Drop label={name + " options"} className="w-4" /></>;
}

function DrawingBar() {
  return (
    <div className="flex h-[22px] shrink-0 items-center bg-linear-to-b from-[#fcfcfc] to-[#f3f3f3] pl-[113px]">
      <Grip /><Menu className="ml-1 w-11">Drawing</Menu>
      <Group className="ml-[3px] w-[53px]" names={["Select Elements", "Rotate Element", "Zoom Selected"]} />
      <Sep className="w-[7px]" /><Tool name="Rectangle" /><Drop label="Shape options" className="w-[11px]" /><Tool name="Text Tool" /><Drop label="Text options" className="w-3" /><Tool name="Edit Shape" /><Sep className="w-1.5" />
      <div className="flex h-[18px] w-[142px] shrink-0 items-center border border-[#828790] bg-white pl-0.5">
        <Icon name="Style" className="size-3" />
        <select aria-label="Font" className="ml-0.5 flex-1 appearance-none bg-transparent outline-none"><option>Arial</option></select><Chevron className="mr-1 h-[5px] w-2" />
      </div>
      <div className="flex h-[18px] w-[38px] shrink-0 items-center border border-[#828790] bg-white pl-0.5">
        <select aria-label="Font size" className="min-w-0 flex-1 appearance-none bg-transparent outline-none"><option>10</option></select><Chevron className="mr-0.5 h-[5px] w-2" />
      </div>
      <div className="flex w-[57px] shrink-0 justify-between px-1.5 font-['Liberation_Serif'] text-xs"><button type="button" className="font-bold">B</button><button type="button" className="font-bold italic">I</button><button type="button" className="font-bold underline">U</button></div>
      <Sep className="w-1.5" />
      <ColorTool name="Font color" bar="bg-black"><path d="M5 9H3V8l1-.5L7.300 0h1.400L12 7.500l1 .5v1H9V8l.7-.5L9 6H6.200l-.6 1.500.6.5v1zM6.800 5h2.200L8 2.500z" fill="#222" /></ColorTool>
      <ColorTool name="Fill color" bar="bg-[#fbf49a]"><path d="m4 5 4-4 4 4-4 4z" fill="#ddd" stroke="#444" /><path d="M5 0v4M11 4c3 0 3 2 2 5" stroke="#444" strokeWidth="1.500" fill="none" /></ColorTool>
      <ColorTool name="Line color" bar="bg-black"><path d="m2 9 3-4 5-4 3 1-1 4-5 3z" fill="#999" stroke="#333" /><path d="m2 9 6-4" stroke="#eee" /></ColorTool>
      <ColorTool name="Marker color" bar="bg-[#5bea1c]"><circle cx="8" cy="5" r="2.500" fill="#0a0a7d" /></ColorTool>
      <Overflow /><Grip className="ml-0.5" />
      <Group className="ml-0.5 w-[89px]" names={["Layout Zoom In", "Layout Zoom Out", "Layout Pan", "Zoom Whole Page", "Zoom 100"]} />
      <Sep className="w-[7px]" /><Group className="w-[34px]" names={["Layout Fixed In", "Layout Fixed Out"]} /><Sep /><Group className="w-[34px]" names={["Layout Back", "Layout Forward"]} />
      <div className="relative ml-px h-[17px] w-[49px] shrink-0 border border-[#d3d3d3] bg-white p-0.5"><select aria-label="Page zoom" disabled className="block h-full w-6 appearance-none bg-[#1979ca]"><option></option></select><div className="absolute inset-y-0 right-1 flex items-center"><Chevron color="#bbb" /></div></div>
      <Sep className="w-1" /><Tool name="Draft Mode" className="h-[19px] w-[19px] border border-[#a9bfcc] bg-[#dfe8ed]" />
      <Group className="ml-px w-[53px]" names={["Focus Frame", "Change Layout", "Data Driven Pages"]} /><Overflow className="ml-[3px]" />
    </div>
  );
}

const APPS = [
  ["Illustrator", "", <g><path d="M1.500 1.500h17v17h-17z" fill="#2b0c00" stroke="#f58220" strokeWidth="1.500" /><text x="10" y="14" fill="#f58220" textAnchor="middle" fontFamily="Open Sans" fontWeight="600" fontSize="10">Ai</text></g>],
  ["File Explorer", "border-[#86b2d8]", <g><path d="M1 3h7l2 2h9v12H1z" fill="#e2a92c" /><path d="M1 6h18v11H1z" fill="#fbd768" /><path d="M4 18v-7h12v7h-3v-4H7v4z" fill="#3c91cc" /></g>],
  ["Chrome", "border-[#86b2d8]", <g><circle cx="10" cy="10" r="9" fill="#e7443a" /><path d="M2.200 5.500A9 9 0 0 0 9 19l4-7.300-6 .300z" fill="#34a353" /><path d="M9 19a9 9 0 0 0 9.300-12.500H10.500l3.500 5z" fill="#fbc116" /><circle cx="10" cy="10" r="4.500" fill="#fff" /><circle cx="10" cy="10" r="3.500" fill="#4a86e8" /></g>],
  ["Excel", "", <g><path d="M10 3h9v14h-9z" fill="#fff" stroke="#217346" /><path d="M12 6h5M12 9h5M12 12h5M14.500 4v12" stroke="#217346" /><path d="m1 3 11-2v18L1 17z" fill="#1d7044" /><text x="6.500" y="14" fill="#fff" textAnchor="middle" fontFamily="Open Sans" fontWeight="700" fontSize="10">X</text></g>],
  ["Snipping Tool", "", <g><ellipse cx="9" cy="6" rx="8.500" ry="4.500" fill="#f4f0f0" stroke="#c79a9d" transform="rotate(-15 9 6)" /><path d="M8 2v5l7-2M8 7l5 5" stroke="#b98489" strokeWidth="1.200" fill="none" /><path d="m11 11 6 3M11 11l2 6" stroke="#379fca" strokeWidth="2" /><circle cx="17" cy="14" r="2.200" fill="none" stroke="#379fca" strokeWidth="1.500" /><circle cx="13" cy="17" r="2.200" fill="none" stroke="#379fca" strokeWidth="1.500" /></g>],
  ["Avro", "", <g><rect x="1" y="1" width="18" height="18" fill="#d57b2f" /><path d="M1 1h18v5H1z" fill="#e9b64a" /><path d="M3 5h14M14.500 5v10M5 9c0-3 4-2 3 1-1 2-2 2-3 1 1 4 6 4 7 0" fill="none" stroke="#3d1a19" strokeWidth="2" /><path d="M1 17h18v2H1z" fill="#962d32" /></g>],
  ["Word", "", <g><path d="M10 3h9v14h-9z" fill="#fff" stroke="#2b579a" /><path d="M12 6h5M12 9h5M12 12h5M12 14h5" stroke="#2b579a" /><path d="m1 3 11-2v18L1 17z" fill="#2a5699" /><text x="6.500" y="14" fill="#fff" textAnchor="middle" fontFamily="Open Sans" fontWeight="700" fontSize="9">W</text></g>],
  ["PowerPoint", "", <g><path d="M10 3h9v14h-9z" fill="#fff" stroke="#d04727" /><path d="M13 6h4v4h-4zM13 12h4M13 14h4" stroke="#d04727" fill="none" /><path d="m1 3 11-2v18L1 17z" fill="#cc3d24" /><text x="6.500" y="14" fill="#fff" textAnchor="middle" fontFamily="Open Sans" fontWeight="700" fontSize="10">P</text></g>],
  ["SPSS", "", <g><circle cx="10" cy="10" r="9.500" fill="#5c9bc8" /><path d="M2 6c4-6 12-6 16-1-5 3-10 0-16 1z" fill="#a9cde6" /><text x="8.500" y="14" fill="#e3f1fb" textAnchor="middle" fontFamily="Liberation Serif" fontSize="12">Σ</text><circle cx="14" cy="8" r="1.300" fill="none" stroke="#fff" strokeWidth=".8" /><circle cx="14" cy="13" r="1.300" fill="none" stroke="#fff" strokeWidth=".8" /></g>],
  ["Edge", "", <g><circle cx="10" cy="10" r="9" fill="#1684cf" /><path d="M1 9C2 0 18-2 19 9c0 5-7 5-7 2 2-4-5-7-11-2z" fill="#4ccb8b" /><path d="M1 9c1-4 4-6 8-6 5 0 6 4 3 7-2-4-7-3-11-1z" fill="#35bde0" /><path d="M1 10c3-4 9-4 10-1-4 1-3 8 3 9-7 3-13-1-13-8z" fill="#1467b4" /><path d="M12 10c-1 4 2 5 6 3-1 4-5 5-8 3s-2-5 2-6z" fill="#203b40" /></g>],
  ["ArcMap", "border-[#9dbde0]", null],
  ["Acrobat", "border-[#9aaad4]", <g><rect x="1" y="1" width="18" height="18" rx="1.500" fill="#b90d0d" /><path d="M9.500 3c3 0-1 10-5.500 13-2 0 0-4 11-4 3 2-1 3-3 0-2-2-4-6-2.500-9z" fill="none" stroke="#fff" strokeWidth="1.200" /></g>],
  ["OBS", "border-[#9aaad4]", <g fill="none" stroke="#ddd" strokeWidth="1.300"><circle cx="10" cy="10" r="8.500" /><path d="M9 3c-3 3-1 7 2 7M16 9c-4-2-7 1-5 4M5 15c4 1 6-2 5-5" strokeWidth="2" /></g>],
];

function Taskbar() {
  return (
    <footer className="flex h-[33px] shrink-0 items-center bg-linear-to-r from-[#2a1b1d] via-[#213431] via-55% to-[#1d1e22] font-['Open_Sans'] text-[10px] text-white">
      <button type="button" aria-label="Start" className="flex h-full w-10 shrink-0 items-center justify-center bg-[#22292b]"><svg viewBox="0 0 14 14" className="size-3.5" fill="#fff"><path d="m0 2 6-.8v5.500H0zM6.700 1.100 14 0v6.700H6.700zM0 7.400h6v5.500L0 12zM6.700 7.400H14V14l-7.300-1z" /></svg></button>
      <label className="flex h-full w-[287px] shrink-0 items-center border-t border-[#d8d8d8] bg-[#f2f2f2] pl-2.5">
        <svg viewBox="0 0 14 14" className="size-3.5" fill="none" stroke="#222"><circle cx="8.500" cy="5.500" r="4.500" strokeWidth="1.200" /><path d="m5 9-4 4" strokeWidth="1.200" /></svg>
        <input aria-label="Search" placeholder="Type here to search" className="ml-[9px] w-40 bg-transparent text-xs outline-none placeholder:text-[#444]" />
      </label>
      <button type="button" aria-label="Cortana" className="flex w-10 shrink-0 justify-center"><span className="size-[13px] rounded-full border-2 border-white" /></button>
      <button type="button" aria-label="Task view" className="flex w-[41px] shrink-0 justify-center"><svg viewBox="0 0 14 14" className="size-3.5" fill="none" stroke="#ddd"><path d="M.5 4.500h9v5h-9zM.5 1v1.500h9V1M.5 13v-1.500h9V13M12.500 1v12M11.500 5h2v2h-2z" /></svg></button>
      <div className="flex h-full w-[538px] shrink-0">
        {APPS.map(([name, line, art]) => (
          <button key={name} type="button" aria-label={name} className={"flex flex-1 items-center justify-center " + (name === "ArcMap" ? "bg-[#5b6264]" : "")}>
            <span className={"flex h-full w-[35px] items-center justify-center border-y-2 border-t-transparent " + (line || "border-b-transparent")}>{art ? <svg viewBox="0 0 20 20" className="size-[19px]">{art}</svg> : <AppLogo className="size-5" />}</span>
          </button>
        ))}
      </div>
      <div className="ml-auto flex h-full shrink-0 items-center pr-3">
        <svg viewBox="0 0 20 18" className="h-4 w-[18px]"><path d="M9 1c8 2 9 11 2 15-4 1-7 0-9-2 7-1 9-7 7-13z" fill="#f7cf3a" /><path d="M1 16c-1-4 4-5 5-3 3-1 5 2 4 4H2z" fill="#e6e9ee" /></svg>
        <span className="ml-2 w-9 text-[11px]">86°F</span>
        <svg viewBox="0 0 10 6" className="ml-px h-1.5 w-2.5" fill="none" stroke="#eee"><path d="m1 5 4-4 4 4" /></svg>
        <svg viewBox="0 0 14 14" className="ml-[7px] size-3.5" fill="none" stroke="#eee"><path d="M1 11C2 5 6 2 13 2M4 12c1-5 4-7 9-7M7 12c1-3 3-4 6-4M10 12c0-1 1-1.500 3-1.500" /></svg>
        <svg viewBox="0 0 16 14" className="ml-1.5 h-3.5 w-4" fill="none" stroke="#eee"><path d="M1 5h2l3-3v10L3 9H1zM8 5c1 1 1 3 0 4M10.500 3.500c2 2 2 5 0 7M13 2c3 3 3 7 0 10" /></svg>
        <svg viewBox="0 0 14 8" className="ml-1.5 h-2 w-3.5"><path d="M.5.5h11v7H.5zM12 3h1.500v2H12z" fill="none" stroke="#eee" /><path d="M2 2h5v4H2z" fill="#eee" /></svg>
        <svg viewBox="0 0 14 12" className="ml-1.5 h-3 w-3.5" fill="#aaa"><path d="m3.500 0 3 2-3 2-3-2zM10.500 0l3 2-3 2-3-2zM3.500 4.500l3 2-3 2-3-2zM10.500 4.500l3 2-3 2-3-2zM7 8l3 2-3 2-3-2z" /></svg>
        <div className="ml-1 w-7 text-center leading-[15px]">ENG<br />INTL</div>
        <div className="ml-1 w-[50px] text-center leading-[15px] whitespace-nowrap">8:33 PM<br />9/30/2021</div>
        <button type="button" aria-label="Notifications" className="ml-2.5 flex items-end"><svg viewBox="0 0 22 20" className="h-5 w-[22px]"><path d="M1 2h14v10H6l-3 3v-3H1z" fill="#fff" /><path d="M3 5h10M3 8h8" stroke="#333" /><circle cx="14" cy="13" r="6" fill="#222" stroke="#999" /><text x="14" y="16.500" textAnchor="middle" fill="#fff" fontSize="9" fontFamily="Open Sans">2</text></svg></button>
      </div>
    </footer>
  );
}

export default function App() {
  return (
    <div className="relative flex min-h-screen flex-col overflow-hidden bg-[#f5f5f5] font-['Lato','Open_Sans',sans-serif] text-[10px] leading-[15px] text-[#1a1a1a]">
      <TopBars />
      <div className="flex flex-1 bg-[#f7f7f7]"><Contents /><MapView /><RightSide /></div>
      <DrawingBar />
      <div className="flex h-[17px] shrink-0 items-center justify-end bg-[#f0f0f0] pr-[83px] whitespace-pre">406052.5  2541103.143 Meters</div>
      <Taskbar />
      <div className="pointer-events-none absolute right-[54px] bottom-[65px] w-[190px] font-['Open_Sans'] whitespace-nowrap text-[#a8a8a8]/80">
        <p className="text-base leading-6">Activate Windows</p><p className="text-xs leading-4">Go to Settings to activate Windows.</p>
      </div>
    </div>
  );
}
